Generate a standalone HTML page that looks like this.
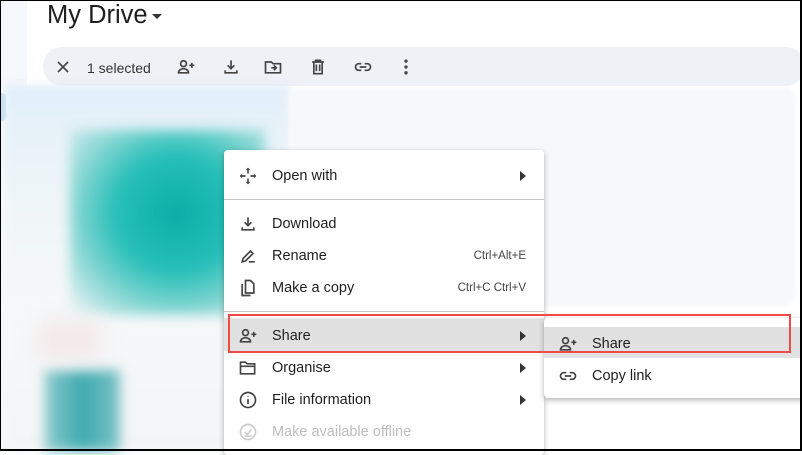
<!DOCTYPE html>
<html><head><meta charset="utf-8"><style>
*{margin:0;padding:0;box-sizing:border-box}
body{width:802px;height:451px;overflow:hidden;position:relative;background:#fff;font-family:"Liberation Sans",Arial,sans-serif;color:#1f1f1f}
.abs{position:absolute}
.frame{position:absolute;inset:0;border:1px solid #000;border-right-width:2px;border-bottom-width:2px;pointer-events:none;z-index:50}
.menu{background:#fff;box-shadow:0 2px 6px rgba(0,0,0,.3);z-index:10}
.it{position:absolute;left:0;right:0;height:32px;font-size:14.5px;display:flex;align-items:center;padding-top:2px}
.it .t{position:absolute;left:48px}
.it svg{position:absolute;left:14px;width:20px;height:20px}
.sc{position:absolute;right:18px;font-size:11.5px;color:#444}
.ar{position:absolute;right:18px;width:0;height:0;border-left:6px solid #333;border-top:5px solid transparent;border-bottom:5px solid transparent}
.tb svg{position:absolute;width:20px;height:20px;top:10px}
</style></head><body>
<div class="abs" style="left:0;top:0;width:27px;height:451px;background:#f5f8fc"></div>
<div class="abs" style="left:0;top:93px;width:6px;height:28px;background:#bcdcf5;border-radius:0 4px 4px 0"></div>
<div class="abs" style="left:47px;top:1px;font-size:25.5px;color:#1f1f1f">My Drive</div>
<div class="abs" style="left:152px;top:14px;border-top:5px solid #333;border-left:5px solid transparent;border-right:5px solid transparent"></div>
<div class="abs tb" style="left:43px;top:47px;width:762px;height:39px;background:#eef1f6;border-radius:20px">
<svg style="left:10px" viewBox="0 0 24 24"><path d="M6 6l12 12M18 6L6 18" stroke="#444" stroke-width="2"/></svg>
<div class="abs" style="left:44px;top:13px;font-size:14px;color:#333">1 selected</div>
<svg style="left:133px" viewBox="0 0 24 24" fill="none" stroke="#444" stroke-width="2"><circle cx="9" cy="8" r="3.5"/><path d="M3 19c0-3 3-5 6-5s6 2 6 5zM19 7v6M16 10h6"/></svg>
<svg style="left:178px" viewBox="0 0 24 24" fill="none" stroke="#444" stroke-width="2"><path d="M12 4v10M8 10l4 4 4-4M5 16v3h14v-3"/></svg>
<svg style="left:220px" viewBox="0 0 24 24" fill="none" stroke="#444" stroke-width="2"><path d="M3 6h7l2 2h9v11H3zM10 13h6M13 10l3 3-3 3"/></svg>
<svg style="left:265px" viewBox="0 0 24 24" fill="none" stroke="#444" stroke-width="2"><path d="M5 6h14M9 6V4h6v2M7 6v14h10V6M10 9v8M14 9v8"/></svg>
<svg style="left:310px" viewBox="0 0 24 24" fill="none" stroke="#444" stroke-width="2"><path d="M10 8H7a4 4 0 000 8h3M14 8h3a4 4 0 010 8h-3M8 12h8"/></svg>
<svg style="left:353px" viewBox="0 0 24 24" fill="#444"><circle cx="12" cy="5" r="2"/><circle cx="12" cy="12" r="2"/><circle cx="12" cy="19" r="2"/></svg>
</div>
<div class="abs" style="left:5px;top:85px;width:285px;height:366px;background:linear-gradient(180deg,#e2eff9 0%,#eef5f8 30%,#f6f8f9 60%,#f3f5f6 100%);filter:blur(4px)"></div>
<div class="abs" style="left:290px;top:88px;width:505px;height:218px;background:#f7f8f9;border-radius:10px;filter:blur(2px)"></div>
<div class="abs" style="left:70px;top:130px;width:195px;height:185px;background:radial-gradient(ellipse at 55% 45%,#09aea6 0%,#27bfb8 40%,#8ed8d5 70%,rgba(213,239,239,0) 100%);filter:blur(6px)"></div>
<div class="abs" style="left:45px;top:370px;width:75px;height:81px;background:linear-gradient(90deg,#8cc9cc,#3eaab0,#7cc2c6);filter:blur(6px)"></div>
<div class="abs" style="left:40px;top:320px;width:60px;height:40px;background:#f3e9ea;filter:blur(10px)"></div>
<div class="abs menu" style="left:224px;top:150px;width:320px;height:305px;border-radius:4px">
<div class="it" style="top:9px"><svg viewBox="0 0 24 24" fill="#444"><path d="M12 2l3 3h-2v4h-2V5H9zM12 22l-3-3h2v-4h2v4h2zM2 12l3-3v2h4v2H5v2zM22 12l-3 3v-2h-4v-2h4V9z"/></svg><span class="t">Open with</span><span class="ar"></span></div>
<div class="abs" style="left:0;right:0;top:49px;height:1px;background:#c7c7c7"></div>
<div class="it" style="top:57px"><svg viewBox="0 0 24 24" fill="none" stroke="#444" stroke-width="2"><path d="M12 4v10M8 10l4 4 4-4M5 16v3h14v-3"/></svg><span class="t">Download</span></div>
<div class="it" style="top:89px"><svg viewBox="0 0 24 24" fill="none" stroke="#444" stroke-width="2"><path d="M5 19l1-4 9-9 3 3-9 9zM13 19h7"/></svg><span class="t">Rename</span><span class="sc">Ctrl+Alt+E</span></div>
<div class="it" style="top:121px"><svg viewBox="0 0 24 24" fill="none" stroke="#444" stroke-width="2"><path d="M9 3h6l4 4v11H9zM5 7v14h10"/></svg><span class="t">Make a copy</span><span class="sc">Ctrl+C Ctrl+V</span></div>
<div class="abs" style="left:0;right:0;top:161px;height:1px;background:#c7c7c7"></div>
<div class="it" style="top:168px;height:33px;background:#e1e1e1"><svg viewBox="0 0 24 24" fill="none" stroke="#444" stroke-width="2"><circle cx="9" cy="8" r="3.5"/><path d="M3 19c0-3 3-5 6-5s6 2 6 5zM19 7v6M16 10h6"/></svg><span class="t">Share</span><span class="ar"></span></div>
<div class="it" style="top:201px"><svg viewBox="0 0 24 24" fill="none" stroke="#444" stroke-width="2"><path d="M3 5h6l2 2h9v12H3zM3 10h17"/></svg><span class="t">Organise</span><span class="ar"></span></div>
<div class="it" style="top:233px"><svg viewBox="0 0 24 24" fill="none" stroke="#444" stroke-width="2"><circle cx="12" cy="12" r="9"/><path d="M12 11v6M12 7v1"/></svg><span class="t">File information</span><span class="ar"></span></div>
<div class="it" style="top:265px;color:#bdbdbd"><svg viewBox="0 0 24 24" fill="none" stroke="#ccc" stroke-width="2"><circle cx="12" cy="12" r="9"/><path d="M8 12l3 3 5-6M8 17h8"/></svg><span class="t">Make available offline</span></div>
</div>
<div class="abs menu" style="left:544px;top:318px;width:270px;height:80px;border-radius:4px">
<div class="it" style="top:9px;height:31px;background:#e1e1e1"><svg viewBox="0 0 24 24" fill="none" stroke="#444" stroke-width="2"><circle cx="9" cy="8" r="3.5"/><path d="M3 19c0-3 3-5 6-5s6 2 6 5zM19 7v6M16 10h6"/></svg><span class="t">Share</span></div>
<div class="it" style="top:41px"><svg viewBox="0 0 24 24" fill="none" stroke="#444" stroke-width="2"><path d="M10 8H7a4 4 0 000 8h3M14 8h3a4 4 0 010 8h-3M8 12h8"/></svg><span class="t">Copy link</span></div>
</div>
<div class="abs" style="left:228px;top:314px;width:563px;height:39px;border:2px solid #ef4a43;z-index:20"></div>
<div class="frame"></div>
</body></html>
